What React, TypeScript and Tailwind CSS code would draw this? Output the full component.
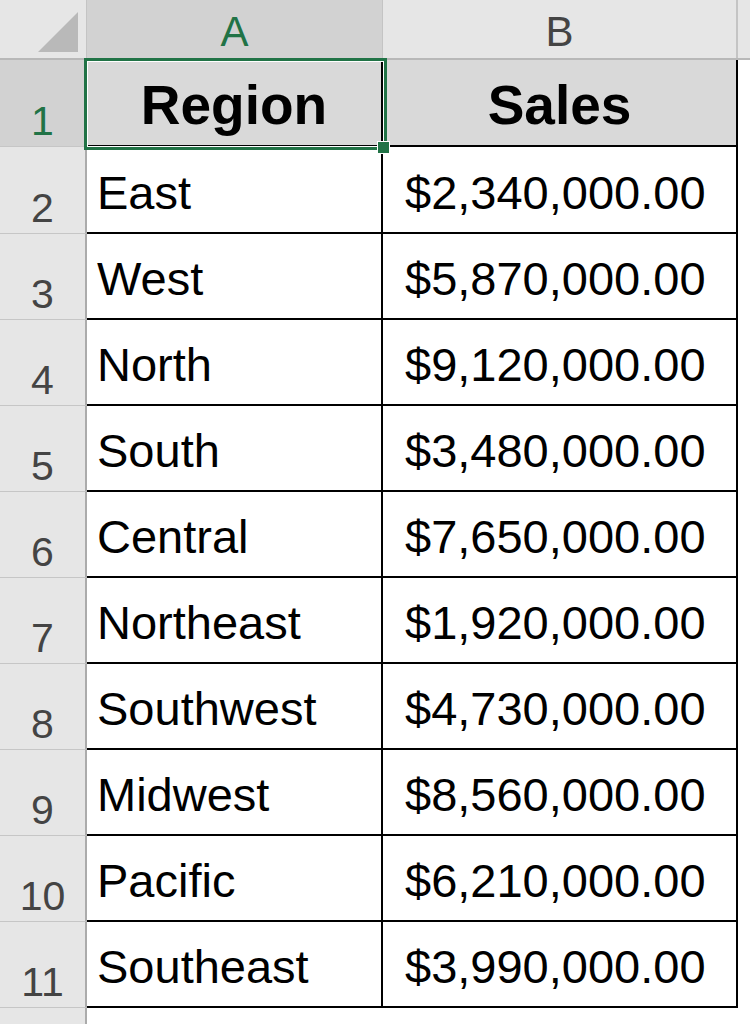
import React from 'react';

// ─── Sheet data ───────────────────────────────────────────────────────────────

const ROWS: [string, string][] = [
  ['East', '$2,340,000.00'],
  ['West', '$5,870,000.00'],
  ['North', '$9,120,000.00'],
  ['South', '$3,480,000.00'],
  ['Central', '$7,650,000.00'],
  ['Northeast', '$1,920,000.00'],
  ['Southwest', '$4,730,000.00'],
  ['Midwest', '$8,560,000.00'],
  ['Pacific', '$6,210,000.00'],
  ['Southeast', '$3,990,000.00'],
];

// ─── Pieces ───────────────────────────────────────────────────────────────────

function RowHeader({ n, selected }: { n: number; selected?: boolean }) {
  return (
    <div
      className={`w-[87px] shrink-0 flex items-end justify-center pb-[4px] border-r-2 border-r-[#ababab] border-b border-b-[#c6c6c6] text-[41px] leading-none ${
        selected ? 'bg-[#d2d2d2] text-[#217346]' : 'bg-[#e6e6e6] text-[#444444]'
      }`}
    >
      {n}
    </div>
  );
}

// ─── App ──────────────────────────────────────────────────────────────────────

export default function App() {
  return (
    <div className="w-[750px] h-[1024px] overflow-hidden bg-white flex flex-col font-['Liberation_Sans',Arial,sans-serif] text-black">
      {/* Column headers */}
      <div className="flex h-[60px] shrink-0 bg-[#e6e6e6] border-b-2 border-[#b8b8b8]">
        <div className="w-[87px] shrink-0 flex items-end justify-end pr-[8px] pb-[6px] border-r border-[#c4c4c4]">
          <svg width="40" height="40" viewBox="0 0 40 40">
            <polygon points="40,0 40,40 0,40" fill="#b9b9b9" />
          </svg>
        </div>
        <div className="w-[296px] shrink-0 flex items-end justify-center pb-[5px] bg-[#d2d2d2] border-r border-[#c4c4c4] text-[42px] leading-none text-[#217346]">
          A
        </div>
        <div className="w-[355px] shrink-0 flex items-end justify-center pb-[5px] border-r-2 border-[#c4c4c4] text-[42px] leading-none text-[#444444]">
          B
        </div>
        <div className="flex-1" />
      </div>

      {/* Row 1: headers */}
      <div className="flex h-[87px] shrink-0">
        <RowHeader n={1} selected />
        <div className="relative w-[296px] shrink-0 flex items-end justify-center pb-[12px] bg-[#d9d9d9] border-b-2 border-r-2 border-black text-[55px] font-bold leading-none">
          Region
          {/* selection */}
          <div className="absolute z-10 -left-[3px] -top-[2px] w-[303px] h-[92px] border-[3px] border-[#217346]">
            <div className="w-full h-full border border-white" />
          </div>
          <div className="absolute z-20 left-[290px] top-[81px] w-[13px] h-[13px] bg-[#217346] border border-white" />
        </div>
        <div className="w-[355px] shrink-0 flex items-end justify-center pb-[12px] bg-[#d9d9d9] border-b-2 border-r-2 border-black text-[55px] font-bold leading-none">
          Sales
        </div>
        <div className="flex-1" />
      </div>

      {/* Data rows */}
      {ROWS.map(([region, sales], i) => (
        <div key={region} className={`flex shrink-0 ${i === 0 ? 'h-[87px]' : 'h-[86px]'}`}>
          <RowHeader n={i + 2} />
          <div className="w-[296px] shrink-0 flex items-end pl-[10px] pb-[16px] border-b-2 border-r-2 border-black text-[47px] leading-none">
            {region}
          </div>
          <div className="w-[355px] shrink-0 flex items-end pl-[22px] pb-[16px] border-b-2 border-r-2 border-black text-[47px] leading-none">
            {sales}
          </div>
          <div className="flex-1" />
        </div>
      ))}

      {/* Row 12 (partly visible) */}
      <div className="flex flex-1">
        <div className="w-[87px] shrink-0 bg-[#e6e6e6] border-r-2 border-[#ababab]" />
        <div className="flex-1" />
      </div>
    </div>
  );
}
